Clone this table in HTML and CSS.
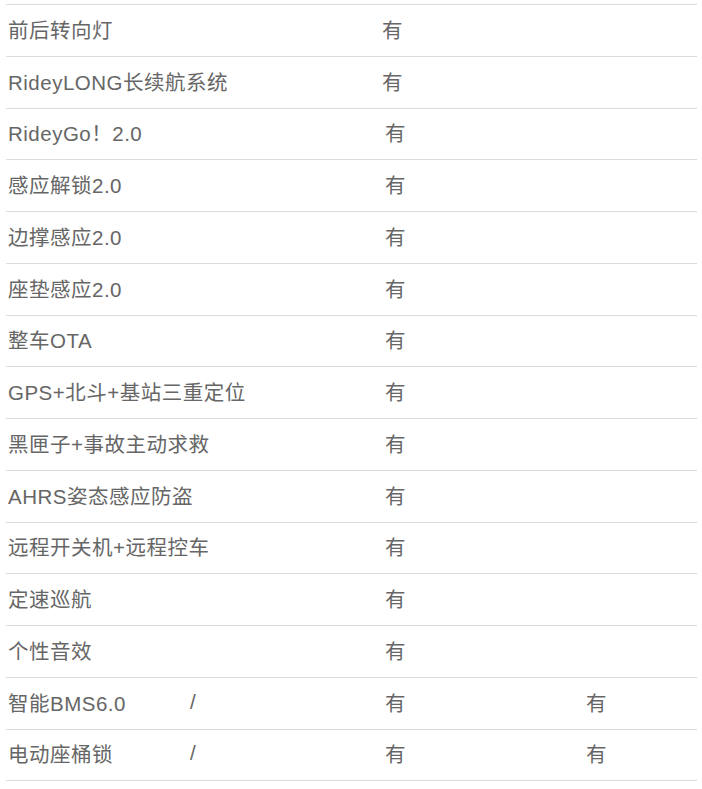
FILE: index.html
```html
<!DOCTYPE html>
<html lang="zh-CN">
<head>
<meta charset="utf-8">
<title>配置</title>
<link rel="stylesheet" href="styles.css">
</head>
<body>
<div class="table">
  <div class="row early"><span class="c1">前后转向灯</span><span class="c2"></span><span class="c3">有</span><span class="c4"></span></div>
  <div class="row early"><span class="c1">RideyLONG长续航系统</span><span class="c2"></span><span class="c3">有</span><span class="c4"></span></div>
  <div class="row"><span class="c1">RideyGo！2.0</span><span class="c2"></span><span class="c3">有</span><span class="c4"></span></div>
  <div class="row"><span class="c1">感应解锁2.0</span><span class="c2"></span><span class="c3">有</span><span class="c4"></span></div>
  <div class="row"><span class="c1">边撑感应2.0</span><span class="c2"></span><span class="c3">有</span><span class="c4"></span></div>
  <div class="row"><span class="c1">座垫感应2.0</span><span class="c2"></span><span class="c3">有</span><span class="c4"></span></div>
  <div class="row"><span class="c1">整车OTA</span><span class="c2"></span><span class="c3">有</span><span class="c4"></span></div>
  <div class="row"><span class="c1">GPS+北斗+基站三重定位</span><span class="c2"></span><span class="c3">有</span><span class="c4"></span></div>
  <div class="row"><span class="c1">黑匣子+事故主动求救</span><span class="c2"></span><span class="c3">有</span><span class="c4"></span></div>
  <div class="row"><span class="c1">AHRS姿态感应防盗</span><span class="c2"></span><span class="c3">有</span><span class="c4"></span></div>
  <div class="row"><span class="c1">远程开关机+远程控车</span><span class="c2"></span><span class="c3">有</span><span class="c4"></span></div>
  <div class="row"><span class="c1">定速巡航</span><span class="c2"></span><span class="c3">有</span><span class="c4"></span></div>
  <div class="row"><span class="c1">个性音效</span><span class="c2"></span><span class="c3">有</span><span class="c4"></span></div>
  <div class="row"><span class="c1">智能BMS6.0</span><span class="c2">/</span><span class="c3">有</span><span class="c4">有</span></div>
  <div class="row"><span class="c1">电动座桶锁</span><span class="c2">/</span><span class="c3">有</span><span class="c4">有</span></div>
</div>
</body>
</html>
```
FILE: styles.css
```css
html, body {
  margin: 0;
  padding: 0;
  background: #ffffff;
}
body {
  font-family: "Liberation Sans", "Noto Sans CJK SC", sans-serif;
  font-size: 20.5px;
  letter-spacing: 0.5px;
  color: #666666;
}
.table {
  margin: 4px 5px 0 6px;
  border-top: 1px solid #dcdcdc;
}
.row {
  box-sizing: border-box;
  height: 51.75px;
  padding-bottom: 3px;
  border-bottom: 1px solid #dcdcdc;
  display: grid;
  grid-template-columns: 184px 195px 201px 1fr;
  align-items: center;
  white-space: nowrap;
}
.c1 {
  padding-left: 2px;
}
.early .c3 {
  margin-left: -3px;
}
```
